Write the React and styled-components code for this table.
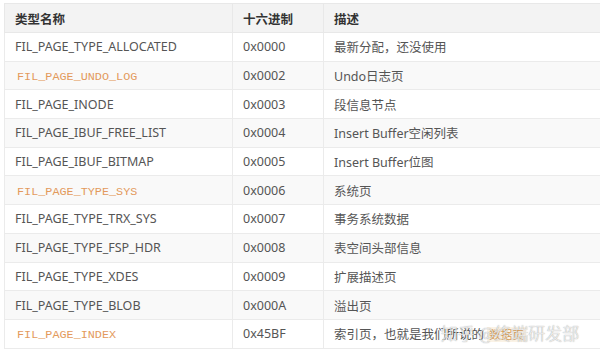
import React from 'react'
import styled, { createGlobalStyle } from 'styled-components'

const GlobalStyle = createGlobalStyle`
  html, body {
    margin: 0;
    padding: 0;
    background: #fff;
  }
  body {
    font-family: 'Noto Sans', 'Noto Sans CJK SC', sans-serif;
  }
`

const Page = styled.div`
  position: relative;
  width: 600px;
  height: 352px;
  overflow: hidden;
  padding: 3px 0 0 4px;
  box-sizing: border-box;
`

const Table = styled.table`
  border-collapse: collapse;
  width: 610px;
  table-layout: fixed;
  font-size: 12.5px;
  color: #555;
`

const HeadCell = styled.th`
  height: 29px;
  padding: 0 10px;
  text-align: left;
  font-weight: 700;
  color: #333;
  background: #f3f3f3;
  border: 1px solid #e8e8e8;
  width: ${p => p.$w}px;
  box-sizing: border-box;
`

const Row = styled.tr`
  background: ${p => (p.$striped ? '#f9f9f9' : '#fff')};
`

const Cell = styled.td`
  height: 28.7px;
  padding: 0 10px;
  border: 1px solid #ebebeb;
  white-space: nowrap;
  box-sizing: border-box;
`

const Code = styled.code`
  font-family: 'Liberation Mono', monospace;
  font-size: 11.8px;
  color: #e39a5c;
  padding: 0 2px;
`

const Mark = styled.span`
  font-size: 11.5px;
  color: #d9a05a;
  background: #fbf3e6;
  padding: 0 2px;
`

const Watermark = styled.div`
  position: absolute;
  left: 441px;
  top: 320px;
  font-family: 'Noto Sans CJK SC', sans-serif;
  font-weight: 300;
  font-size: 17px;
  color: rgba(255, 255, 255, 0.85);
  text-shadow: 0 0 1px rgba(110, 110, 110, 0.6), 0 0 1px rgba(110, 110, 110, 0.4);
  white-space: nowrap;
`

const rows = [
  ['FIL_PAGE_TYPE_ALLOCATED', '0x0000', '最新分配，还没使用'],
  ['FIL_PAGE_UNDO_LOG', '0x0002', 'Undo日志页', true],
  ['FIL_PAGE_INODE', '0x0003', '段信息节点'],
  ['FIL_PAGE_IBUF_FREE_LIST', '0x0004', 'Insert Buffer空闲列表'],
  ['FIL_PAGE_IBUF_BITMAP', '0x0005', 'Insert Buffer位图'],
  ['FIL_PAGE_TYPE_SYS', '0x0006', '系统页', true],
  ['FIL_PAGE_TYPE_TRX_SYS', '0x0007', '事务系统数据'],
  ['FIL_PAGE_TYPE_FSP_HDR', '0x0008', '表空间头部信息'],
  ['FIL_PAGE_TYPE_XDES', '0x0009', '扩展描述页'],
  ['FIL_PAGE_TYPE_BLOB', '0x000A', '溢出页'],
  [
    'FIL_PAGE_INDEX',
    '0x45BF',
    <>
      索引页，也就是我们所说的 <Mark>数据页</Mark>
    </>,
    true,
  ],
]

const App = () => (
  <Page>
    <GlobalStyle />
    <Table>
      <thead>
        <tr>
          <HeadCell $w={228}>类型名称</HeadCell>
          <HeadCell $w={91}>十六进制</HeadCell>
          <HeadCell $w={291}>描述</HeadCell>
        </tr>
      </thead>
      <tbody>
        {rows.map(([name, hex, desc, code], i) => (
          <Row key={i} $striped={i % 2 === 1}>
            <Cell>{code ? <Code>{name}</Code> : name}</Cell>
            <Cell>{hex}</Cell>
            <Cell>{desc}</Cell>
          </Row>
        ))}
      </tbody>
    </Table>
    <Watermark>知乎 @终端研发部</Watermark>
  </Page>
)

export default App
